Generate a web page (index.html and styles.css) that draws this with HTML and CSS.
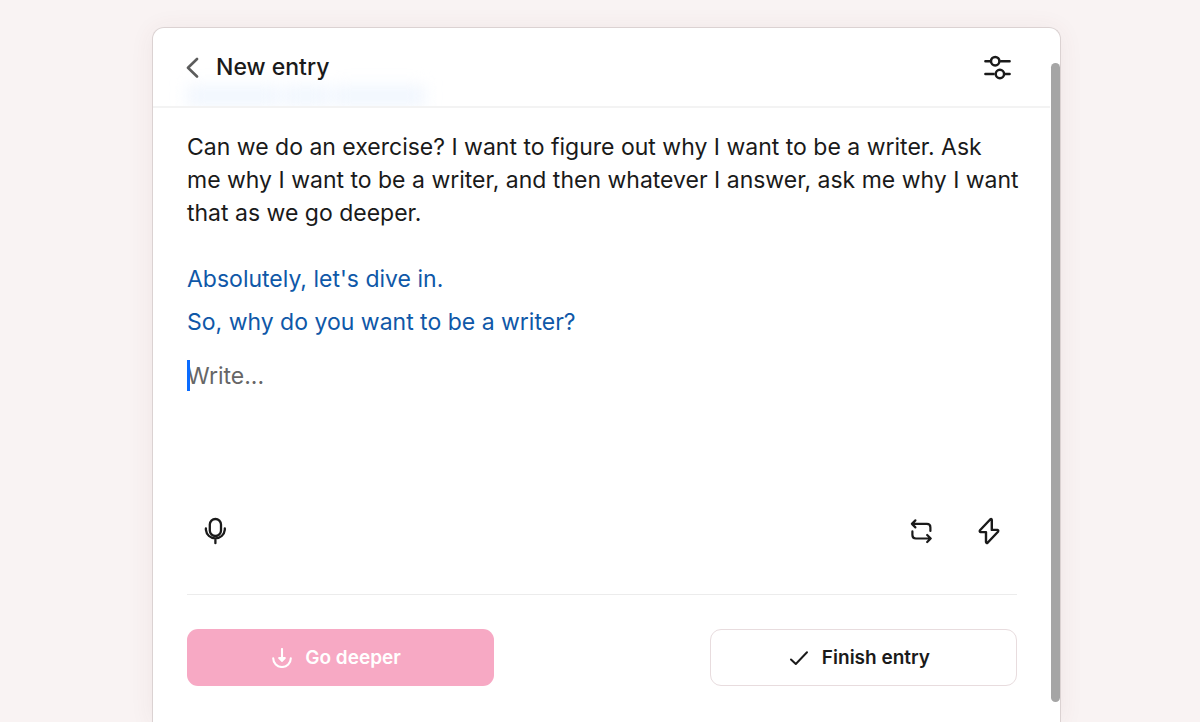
FILE: index.html
```
<!DOCTYPE html>
<html lang="en">
<head>
    <meta charset="UTF-8">
    <meta name="viewport" content="width=device-width, initial-scale=1.0">
    <title>New entry</title>
    <link rel="stylesheet" href="styles.css">
</head>
<body>
    <main class="panel">
        <header class="header">
            <div class="scrolled-text" aria-hidden="true">
                <span class="smudge"></span>
                <span class="smudge smudge-short"></span>
                <span class="smudge"></span>
            </div>
            <button class="icon-button" type="button" aria-label="Back">
                <svg width="13" height="22" viewBox="0 0 13 22" fill="none" stroke="#5c5c5c" stroke-width="2.6" stroke-linecap="round" stroke-linejoin="round">
                    <path d="M11 3 L2 11.8 L11 20.5"/>
                </svg>
            </button>
            <h1 class="title">New entry</h1>
            <button class="icon-button settings" type="button" aria-label="Settings">
                <svg width="28" height="26" viewBox="0 0 28 26" fill="none" stroke="#1a1a1a" stroke-width="2.5" stroke-linecap="round">
                    <path d="M1.4 7.2 H6 M17 7.2 H25.6"/>
                    <circle cx="11.2" cy="7.2" r="4.2"/>
                    <path d="M1.4 20 H9.6 M21 20 H25.6"/>
                    <circle cx="15.9" cy="20" r="4.2"/>
                </svg>
            </button>
        </header>

        <div class="content">
            <p class="entry">Can we do an exercise? I want to figure out why I want to be a writer. Ask<br>
            me why I want to be a writer, and then whatever I answer, ask me why I want that as we go deeper.</p>

            <div class="reply">
                <p>Absolutely, let's dive in.</p>
                <p>So, why do you want to be a writer?</p>
            </div>

            <div class="write">
                <span class="caret"></span>
                <textarea class="write-input" aria-label="Write" placeholder="Write..."></textarea>
            </div>

            <div class="tools">
                <button class="icon-button" type="button" aria-label="Dictate">
                    <svg width="22" height="28" viewBox="0 0 22 28" fill="none" stroke="#1a1a1a" stroke-width="2.3" stroke-linecap="round">
                        <rect x="5.8" y="2" width="11.2" height="17" rx="5.6"/>
                        <path d="M1.9 11.5 V12.9 A9.5 9.5 0 0 0 20.8 12.9 V11.5 M11.4 22.7 V26.2"/>
                    </svg>
                </button>
                <div class="tools-right">
                    <button class="icon-button" type="button" aria-label="Repeat">
                        <svg width="22" height="26" viewBox="0 0 22 26" fill="none" stroke="#1a1a1a" stroke-width="2.2" stroke-linecap="round" stroke-linejoin="round">
                            <path d="M5.4 2.4 L1.9 5.9 L5.4 9.4 M1.9 5.9 H16.9 Q20.4 5.9 20.4 9.4 V12.9"/>
                            <path d="M17.2 17 L20.7 20.5 L17.2 24 M20.7 20.5 H5.9 Q2.4 20.5 2.4 17 V13.4"/>
                        </svg>
                    </button>
                    <button class="icon-button" type="button" aria-label="Prompts">
                        <svg width="22" height="28" viewBox="0 0 22 28" fill="none" stroke="#1a1a1a" stroke-width="2.4" stroke-linejoin="round">
                            <path d="M12.4 2.3 L2 13.3 Q1.2 14.7 2.6 15.1 H8 V25 Q8.3 26.4 9.6 25.8 L20 14.7 Q20.7 13.2 19.4 12.9 H13.8 V2.9 Q13.5 1.6 12.4 2.3 Z"/>
                        </svg>
                    </button>
                </div>
            </div>

            <footer class="actions">
                <button class="button button-primary" type="button">
                    <svg width="20" height="20" viewBox="0 0 20 20" fill="none" stroke="#fff" stroke-width="2.1" stroke-linecap="round" stroke-linejoin="round">
                        <path d="M10 1 V12.5"/>
                        <path d="M7.2 10 L10 12.8 L12.8 10 Z" fill="#fff"/>
                        <path d="M1.2 10.2 A8.8 8.8 0 0 0 18.8 10.2"/>
                    </svg>
                    Go deeper
                </button>
                <button class="button button-outline" type="button">
                    <svg width="20" height="20" viewBox="0 0 20 20" fill="none" stroke="#1a1a1a" stroke-width="2" stroke-linecap="round" stroke-linejoin="round">
                        <path d="M2 11.5 L6.8 16 L18 4.3"/>
                    </svg>
                    Finish entry
                </button>
            </footer>
        </div>

        <div class="scroll-thumb"></div>
    </main>
</body>
</html>
```
FILE: styles.css
```
* {
    box-sizing: border-box;
}
body {
    margin: 0;
    padding: 27px 139px 0 152px;
    background: #f9f3f3;
    color: #1a1a1a;
    font-family: Inter, "Liberation Sans", sans-serif;
    overflow: hidden;
}
h1,
p {
    margin: 0;
}
button {
    padding: 0;
    border: none;
    background: none;
    color: inherit;
    font-family: inherit;
    cursor: pointer;
}
.panel {
    position: relative;
    min-height: calc(100vh - 27px);
    background: #fff;
    border: 1px solid #dbd2d2;
    border-bottom: none;
    border-radius: 12px 12px 0 0;
    box-shadow: 0 2px 24px rgba(120, 60, 60, 0.07);
}
.header {
    position: relative;
    display: flex;
    align-items: center;
    height: 80px;
    margin-right: 10px;
    padding: 0 38px 0 33px;
    border-bottom: 2px solid #f3f3f3;
    overflow: hidden;
}
.icon-button {
    display: flex;
    position: relative;
}
.title {
    position: relative;
    margin-left: 17px;
    font-size: 23px;
    font-weight: 500;
    line-height: 33px;
}
.settings {
    margin-left: auto;
}
/* page text that has scrolled under the frosted header */
.scrolled-text {
    position: absolute;
    left: 34px;
    bottom: 0;
    display: flex;
    gap: 4px;
    width: 238px;
    height: 20px;
    filter: blur(8px);
}
.smudge {
    flex: 2;
    background: #f0f6fe;
}
.smudge-short {
    flex: 1;
}
.content {
    padding: 23px 43px 36px 34px;
}
.entry,
.reply,
.write-input {
    font-size: 23px;
    line-height: 33px;
}
.entry {
    margin-right: -12px;
}
.reply {
    display: flex;
    flex-direction: column;
    gap: 10px;
    margin-top: 33px;
    color: #0f58a8;
}
.write {
    position: relative;
    margin-top: 21px;
}
.write-input {
    display: block;
    width: 100%;
    height: 135px;
    padding: 0;
    border: none;
    outline: none;
    resize: none;
    background: none;
    color: inherit;
    font-family: inherit;
}
.write-input::placeholder {
    color: #666;
    opacity: 1;
}
.caret {
    position: absolute;
    top: 0;
    left: 0;
    width: 3px;
    height: 31px;
    background: #0a6cff;
}
.tools {
    display: flex;
    justify-content: space-between;
    align-items: center;
    height: 72px;
    padding: 0 17px;
}
.tools-right {
    display: flex;
    align-items: center;
    gap: 46px;
}
.actions {
    display: flex;
    justify-content: space-between;
    margin-top: 27px;
    padding-top: 34px;
    border-top: 1px solid #ececec;
}
.button {
    display: flex;
    align-items: center;
    justify-content: center;
    gap: 13px;
    width: 37%;
    height: 57px;
    padding-right: 8px;
    border-radius: 11px;
    font-size: 19px;
    font-weight: 600;
}
.button-primary {
    background: #f7a9c4;
    color: #fff;
}
.button-outline {
    background: #fff;
    border: 1px solid #e8dcde;
}
.scroll-thumb {
    position: absolute;
    top: 35px;
    right: 0;
    width: 9px;
    height: 639px;
    border-radius: 5px;
    background: #a5a5a5;
}
```
